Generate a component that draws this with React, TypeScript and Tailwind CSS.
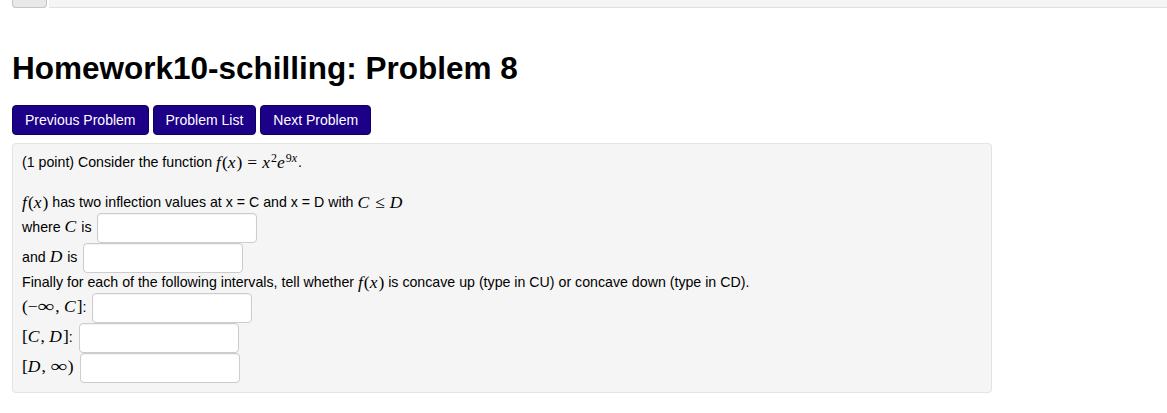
import React from "react";

const sans = "font-['Liberation_Sans',Arial,sans-serif]";

function Math({ children }: { children: React.ReactNode }) {
  return <span className="font-['Liberation_Serif',serif] text-[17.5px] leading-none">{children}</span>;
}

function V({ children }: { children: React.ReactNode }) {
  return <i className="italic pr-[1px]">{children}</i>;
}

function Op({ children }: { children: React.ReactNode }) {
  return <span className="px-[5px]">{children}</span>;
}

function Inf() {
  return <span className="inline-block scale-x-[1.35] mx-[2.5px]">∞</span>;
}

function AnswerRow({ label }: { label: React.ReactNode }) {
  return (
    <div className="flex items-center h-[30px]">
      <span className="whitespace-nowrap">{label}</span>
      <input
        type="text"
        className="ml-[6px] h-[30px] w-[160px] bg-white border border-[#cccccc] rounded-[4px] shadow-[inset_0_1px_1px_rgba(0,0,0,0.05)]"
      />
    </div>
  );
}

export default function App() {
  return (
    <div className={`${sans} bg-white min-h-[413px] text-black`}>
      {/* top nav remnant */}
      <div className="flex pl-3 h-2">
        <div className="w-[35px] h-[8px] bg-[#e8e8e8] border border-t-0 border-[#c4c4c4] rounded-b-[4px]"></div>
        <div className="flex-1 ml-[2px] h-[8px] bg-[#f5f5f5] border-b border-[#e0e0e0]"></div>
      </div>

      <div className="px-3">
        <h1 className="mt-[43px] text-[31.5px] leading-[34px] font-bold">
          Homework10-schilling: Problem 8
        </h1>

        <div className="flex gap-1 mt-5">
          {["Previous Problem", "Problem List", "Next Problem"].map((t) => (
            <button
              key={t}
              className="h-[30px] px-[12px] text-[14px] text-white bg-[#1c0088] border border-[#120060] rounded-[4px]"
            >
              {t}
            </button>
          ))}
        </div>

        <div className="mt-2 w-[980px] bg-[#f5f5f5] border border-[#e3e3e3] rounded-[4px] pt-[9px] pb-[9px] pl-[9px] text-[14.2px]">
          <div className="h-5 flex items-center">
            <span>(1 point) Consider the function&nbsp;</span>
            <Math>
              <V>f</V>(<V>x</V>)<Op>=</Op><V>x</V>
              <sup className="text-[12px]">2</sup>
              <V>e</V>
              <sup className="text-[12px]">
                9<V>x</V>
              </sup>
            </Math>
            <span>.</span>
          </div>

          <div className="h-5 mt-5 flex items-center">
            <Math>
              <V>f</V>(<V>x</V>)
            </Math>
            <span>&nbsp;has two inflection values at x = C and x = D with&nbsp;</span>
            <Math>
              <V>C</V>
              <Op>≤</Op>
              <V>D</V>
            </Math>
          </div>

          <AnswerRow
            label={
              <>
                where <Math><V>C</V></Math> is
              </>
            }
          />
          <AnswerRow
            label={
              <>
                and <Math><V>D</V></Math> is
              </>
            }
          />

          <div className="h-5 flex items-center">
            <span>Finally for each of the following intervals, tell whether&nbsp;</span>
            <Math>
              <V>f</V>(<V>x</V>)
            </Math>
            <span>&nbsp;is concave up (type in CU) or concave down (type in CD).</span>
          </div>

          <AnswerRow
            label={
              <>
                <Math>
                  (−<Inf />, <V>C</V>]
                </Math>
                :
              </>
            }
          />
          <AnswerRow
            label={
              <>
                <Math>
                  [<V>C</V>, <V>D</V>]
                </Math>
                :
              </>
            }
          />
          <AnswerRow
            label={
              <Math>
                [<V>D</V>, <Inf />)
              </Math>
            }
          />
        </div>
      </div>
    </div>
  );
}
